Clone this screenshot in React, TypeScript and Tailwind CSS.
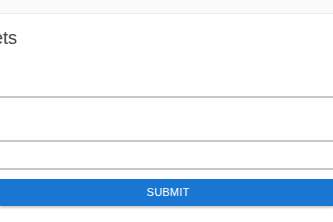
export default function App() {
  return (
    <div className="w-[333px] h-[222px] overflow-hidden bg-white font-['Liberation_Sans',Arial,sans-serif]">
      <div className="h-[14px] bg-[#fafafa] border-b border-[#ececec]" />
      <div className="bg-white">
        <div className="h-[84px] border-b-2 border-[#c8c8c8] pt-[14px]">
          <p className="ml-[-7px] text-[18px] leading-[20px] text-[#444]">ets</p>
        </div>
        <div className="h-[44px] border-b-2 border-[#c8c8c8]" />
        <div className="h-[28px] border-b-2 border-[#c8c8c8]" />
        <div className="mt-[9px] h-[27px] bg-[#1976d2] shadow-[0_2px_2px_rgba(0,0,0,0.2)] flex items-center justify-center">
          <span className="text-[11px] font-medium tracking-[0.2px] text-white pl-[3px]">SUBMIT</span>
        </div>
      </div>
    </div>
  )
}
